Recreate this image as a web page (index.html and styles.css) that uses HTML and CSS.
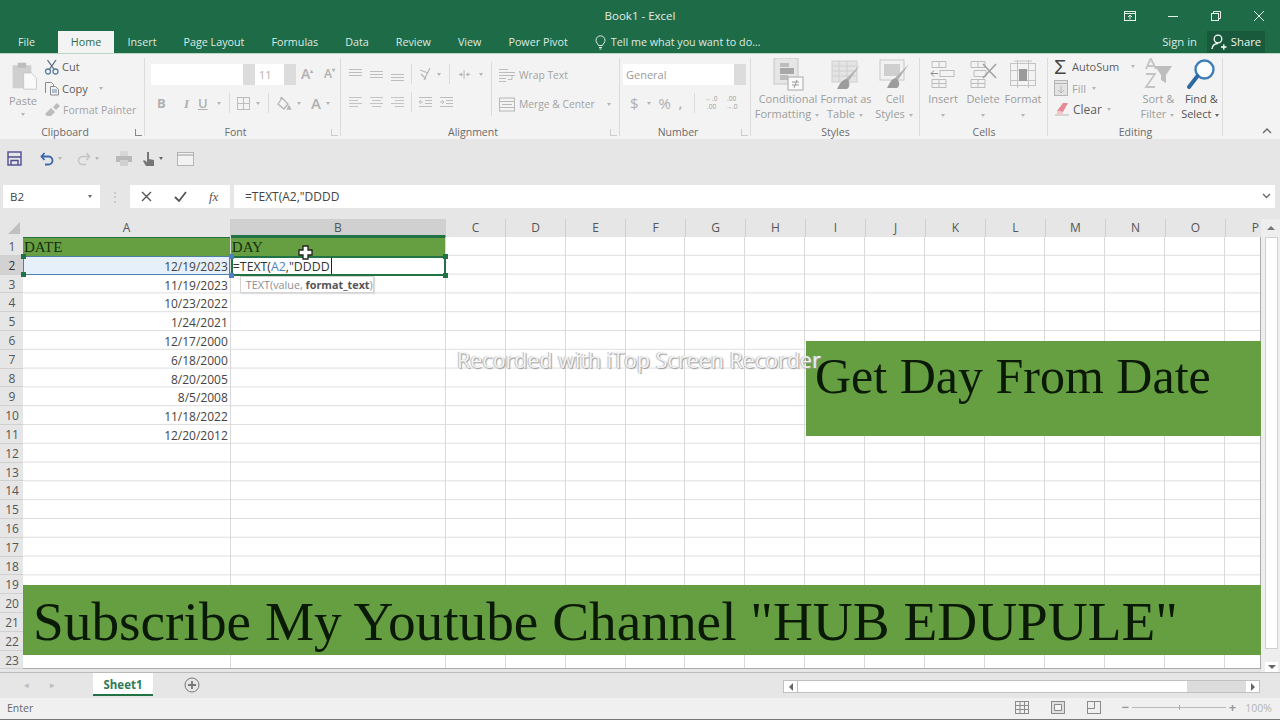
FILE: index.html
```html
<!DOCTYPE html>
<html lang="en">
<head>
<meta charset="utf-8">
<title>Book1 - Excel</title>
<link rel="stylesheet" href="styles.css">
</head>
<body>
<div class="app">
  <header class="titlebar">
    <div></div>
    <div class="doc-title">Book1 - Excel</div>
    <div class="win-controls">
      <span class="win-btn"><svg width="14" height="12" viewBox="0 0 14 12" fill="none" stroke="#e8f0ec"><rect x="1.5" y="1.5" width="11" height="9"/><path d="M1.5 3.5h11M7 9.5v-4M5 7l2-2 2 2"/></svg></span>
      <span class="win-btn"><svg width="12" height="12" viewBox="0 0 12 12" stroke="#e8f0ec"><path d="M1 6.5h10"/></svg></span>
      <span class="win-btn"><svg width="12" height="12" viewBox="0 0 12 12" fill="none" stroke="#e8f0ec"><rect x="1.5" y="3.5" width="7" height="7"/><path d="M3.5 3.5v-2h7v7h-2"/></svg></span>
      <span class="win-btn"><svg width="12" height="12" viewBox="0 0 12 12" stroke="#e8f0ec"><path d="M1 1l10 10M11 1L1 11"/></svg></span>
    </div>
  </header>

  <nav class="tabs">
    <span class="tab tab-file">File</span>
    <span class="tab tab-active">Home</span>
    <span class="tab">Insert</span>
    <span class="tab">Page Layout</span>
    <span class="tab">Formulas</span>
    <span class="tab">Data</span>
    <span class="tab">Review</span>
    <span class="tab">View</span>
    <span class="tab">Power Pivot</span>
    <span class="tab tell"><svg width="11" height="15" viewBox="0 0 11 15" fill="none" stroke="#dfeae4"><path d="M3.5 10.5C2.8 8.5 1 7.700 1 5.300a4.500 4.500 0 0 1 9 0C10 7.700 8.200 8.500 7.500 10.500zM4 12.500h3M4.500 14h2"/></svg>Tell me what you want to do...</span>
    <span class="tabs-right">
      <span class="signin">Sign in</span>
      <span class="share"><svg width="16" height="16" viewBox="0 0 16 16" fill="none" stroke="#fff" stroke-width="1.300"><circle cx="7" cy="5" r="3.800"/><path d="M1 15c.5-4 3-5.500 6-5.500M10 13h5.500M12.800 10.300v5.400"/></svg><span class="share-text">Share</span></span>
    </span>
  </nav>

  <section class="ribbon">
    <div class="group g-clip has-launcher">
      <div class="group-body clip-body">
        <div class="paste">
          <svg width="27" height="29" viewBox="0 0 30 34"><rect x="1" y="5" width="22" height="27" fill="#cfcfcf"/><rect x="7" y="2" width="10" height="6" fill="#bdbdbd"/><path d="M14 14h9l6 6v13H14z" fill="#fafafa" stroke="#c4c4c4"/></svg>
          <span>Paste</span>
          <i class="caret"></i>
        </div>
        <div class="stack clip-stack">
          <div class="line strong"><svg width="16" height="16" viewBox="0 0 16 16" fill="none" stroke="#5b6b78" stroke-width="1.300"><circle cx="4" cy="12.500" r="2.500" stroke="#5a7fa0"/><circle cx="11.500" cy="12.500" r="2.500" stroke="#5a7fa0"/><path d="M5.300 10.500L12 1M10.200 10.500L3.500 1"/></svg>Cut</div>
          <div class="line strong"><svg width="16" height="15" viewBox="0 0 16 15" fill="none" stroke="#8a8a8a"><path d="M1.500 12V1.500h6l2 2V5"/><path d="M6.500 5.500h5l3 3v5.500h-8z"/><path d="M8 9h5M8 11h5" stroke="#6b8bb0"/></svg>Copy<i class="caret caret-gap"></i></div>
          <div class="line dim painter"><svg width="17" height="15" viewBox="0 0 17 15" fill="#bcbcbc"><path d="M1 12l6-6 4 4-4 4H3zM9 5l4-4 3 3-4 4z"/></svg>Format Painter</div>
        </div>
      </div>
      <div class="group-label">Clipboard<i class="launcher launcher-dark"></i></div>
    </div>

    <div class="group g-font has-launcher">
      <div class="group-body font-body">
        <div class="tool-row">
          <span class="combo combo-name"><b></b></span>
          <span class="combo combo-size">11<b></b></span>
          <span class="glyph glyph-big first-a">A<sup>▴</sup></span>
          <span class="glyph glyph-small">A<sup>▾</sup></span>
        </div>
        <div class="tool-row row-font2">
          <span class="glyph bold">B</span>
          <span class="glyph italic">I</span>
          <span class="glyph under">U</span>
          <i class="caret"></i>
          <i class="vsep"></i>
          <svg width="15" height="15" viewBox="0 0 15 15" fill="none" stroke="#bdbdbd"><rect x="1.500" y="1.500" width="12" height="12"/><path d="M7.500 1.500v12M1.500 7.500h12"/></svg>
          <i class="caret"></i>
          <i class="vsep"></i>
          <svg width="17" height="15" viewBox="0 0 17 15" fill="none" stroke="#b5b5b5" stroke-width="1.300"><path d="M7 2l6 6-4 5-6-5zM6 1v3"/><path d="M14 10l1.500 3h-3z" fill="#ccc"/></svg>
          <i class="caret"></i>
          <span class="glyph font-a">A</span>
          <i class="caret"></i>
        </div>
      </div>
      <div class="group-label">Font<i class="launcher"></i></div>
    </div>

    <div class="group g-align has-launcher">
      <div class="group-body align-body">
        <div class="align-grid">
          <div class="tool-row row-a1">
            <svg class="al" width="15" height="15" viewBox="0 0 15 15" stroke="#bdbdbd"><path d="M1 2.500h13M1 5.500h13M1 8.500h13" fill="none"/></svg>
            <svg class="al" width="15" height="15" viewBox="0 0 15 15" stroke="#bdbdbd"><path d="M1 4.500h13M1 7.500h13M1 10.500h13" fill="none"/></svg>
            <svg class="al" width="15" height="15" viewBox="0 0 15 15" stroke="#bdbdbd"><path d="M1 7.500h13M1 10.500h13M1 13.500h13" fill="none"/></svg>
            <i class="vsep sep-a"></i>
            <svg width="17" height="15" viewBox="0 0 17 15" fill="none" stroke="#b8b8b8" stroke-width="1.200"><path d="M2 3l8 3M3 7l5 5M12 1L6 13"/></svg>
            <i class="caret"></i>
            <i class="vsep sep-c"></i>
            <svg width="13" height="11" viewBox="0 0 15 11" fill="none" stroke="#b5b5b5"><path d="M1 5.500h4M3 3.500l2 2-2 2M7 .5v10M14 5.500h-4M12 3.500l-2 2 2 2" stroke-width="1.200"/></svg>
            <i class="caret caret-merge"></i>
          </div>
          <div class="tool-row row-a2">
            <svg class="al" width="15" height="15" viewBox="0 0 15 15" stroke="#c4c4c4"><path d="M1 2.500h13M1 5.500h9M1 8.500h13M1 11.500h9" fill="none"/></svg>
            <svg class="al" width="15" height="15" viewBox="0 0 15 15" stroke="#c4c4c4"><path d="M1 2.500h13M3 5.500h9M1 8.500h13M3 11.500h9" fill="none"/></svg>
            <svg class="al" width="15" height="15" viewBox="0 0 15 15" stroke="#c4c4c4"><path d="M1 2.500h13M5 5.500h9M1 8.500h13M5 11.500h9" fill="none"/></svg>
            <i class="vsep sep-a"></i>
            <svg width="15" height="15" viewBox="0 0 15 15" fill="none" stroke="#bdbdbd"><path d="M1 2.500h13M7 5.500h7M7 8.500h7M1 11.500h13M5 7H1M3 5L1 7l2 2"/></svg>
            <svg class="ind" width="15" height="15" viewBox="0 0 15 15" fill="none" stroke="#bdbdbd"><path d="M1 2.500h13M7 5.500h7M7 8.500h7M1 11.500h13M1 7h4M3 5l2 2-2 2"/></svg>
          </div>
        </div>
        <i class="vsep sep-tall"></i>
        <div class="merge-col">
          <div class="line dim"><svg width="18" height="15" viewBox="0 0 18 15" fill="none" stroke="#bcbcbc"><path d="M1 1.500h9M1 4.500h16M1 7.500h16M1 10.500h7M1 13.500h7M14 7.500v4h-4"/></svg>Wrap Text</div>
          <div class="line dim"><svg width="18" height="15" viewBox="0 0 18 15" fill="none" stroke="#b8b8b8"><rect x="1.500" y="1" width="15" height="13"/><path d="M1.500 4.500h15M1.500 10.500h15M4 7.500h10"/></svg>Merge &amp; Center<i class="caret caret-gap"></i></div>
        </div>
      </div>
      <div class="group-label">Alignment<i class="launcher"></i></div>
    </div>

    <div class="group g-num has-launcher">
      <div class="group-body font-body num-body">
        <div class="tool-row">
          <span class="combo combo-gen">General<b></b></span>
        </div>
        <div class="tool-row row-num2">
          <span class="glyph dollar">$</span>
          <i class="caret"></i>
          <span class="glyph pct">%</span>
          <span class="glyph comma">,</span>
          <i class="vsep"></i>
          <span class="dec">←.0<br>.00</span>
          <span class="dec">.00<br>→.0</span>
        </div>
      </div>
      <div class="group-label">Number<i class="launcher"></i></div>
    </div>

    <div class="group g-styles">
      <div class="group-body big-body styles-body">
        <div class="big big-cf">
          <svg width="34" height="33" viewBox="0 0 34 33"><rect x="3" y="0" width="24" height="26" fill="#e6e6e6" stroke="#c8c8c8"/><rect x="9" y="5" width="9" height="4" fill="#bdbdbd"/><rect x="9" y="10" width="14" height="6" fill="#a8a8a8"/><rect x="9" y="17" width="8" height="5" fill="#bdbdbd"/><rect x="17" y="19" width="15" height="13" fill="#fafafa" stroke="#a8a8a8"/><path d="M21 24h7M21 27h7M26 22l-3 8" stroke="#9a9a9a" fill="none"/></svg>
          <span>Conditional<br>Formatting<i class="caret inline"></i></span>
        </div>
        <div class="big big-ft">
          <svg width="34" height="33" viewBox="0 0 34 33"><rect x="3" y="3" width="25" height="21" fill="#e4e4e4" stroke="#cfcfcf"/><path d="M3 8h25M3 13h25M3 18h25M10 3v21M18 3v21" stroke="#cfcfcf"/><path d="M31 7L19 24l-3-2z" fill="#b0b0b0"/><path d="M17 21c-6 2-7 7-9 10h10c3-2 3-6 1-9z" fill="#9c9c9c"/></svg>
          <span>Format as<br>Table<i class="caret inline"></i></span>
        </div>
        <div class="big big-cs">
          <svg width="32" height="33" viewBox="0 0 32 33"><rect x="1" y="2" width="24" height="20" fill="#f2f2f2" stroke="#c8c8c8"/><rect x="5" y="6" width="16" height="12" fill="#cfcfcf"/><path d="M30 6L19 22l-3-2z" fill="#b0b0b0"/><path d="M16 20c-5 2-6 7-8 10h10c3-2 3-6 0-9z" fill="#9c9c9c"/></svg>
          <span>Cell<br>Styles<i class="caret inline"></i></span>
        </div>
      </div>
      <div class="group-label">Styles</div>
    </div>

    <div class="group g-cells">
      <div class="group-body big-body cells-body">
        <div class="big big-cell">
          <svg width="26" height="33" viewBox="0 0 26 33" fill="none" stroke="#bdbdbd"><path d="M2 3.500h14v6H2zM9 3.500v6M2 21.500h14v8H2zM9 21.500v8M2 25.500h14"/><path d="M1 15.500h7M4 12.500l-3 3 3 3" stroke="#8f8f8f"/><rect x="10" y="12.500" width="14" height="6"/></svg>
          <span>Insert<br><i class="caret"></i></span>
        </div>
        <div class="big big-cell">
          <svg width="28" height="33" viewBox="0 0 28 33" fill="none" stroke="#bdbdbd"><path d="M2 3.500h14v6H2zM9 3.500v6M2 21.500h14v8H2zM9 21.500v8M2 25.500h14M5 12.500h12v6H5z"/><path d="M14 6l13 14M27 6L14 20" stroke="#a0a0a0" stroke-width="1.500"/></svg>
          <span>Delete<br><i class="caret"></i></span>
        </div>
        <div class="big big-cell">
          <svg width="28" height="33" viewBox="0 0 28 33" fill="none" stroke="#c4c4c4"><rect x="1.500" y="5.500" width="25" height="22"/><path d="M8.500 2v28M19.500 2v28M1.500 12.500h25M1.500 22.500h25M5 3h18"/><rect x="10" y="11" width="8" height="12" fill="#9a9a9a" stroke="none"/></svg>
          <span>Format<br><i class="caret"></i></span>
        </div>
      </div>
      <div class="group-label">Cells</div>
    </div>

    <div class="group g-edit">
      <div class="group-body edit-body">
        <div class="stack edit-stack">
          <div class="line strong"><span class="sigma">Σ</span>AutoSum<i class="caret caret-gap"></i></div>
          <div class="line dim"><svg width="14" height="16" viewBox="0 0 14 16" fill="#e3e3e3" stroke="#b5b5b5"><rect x=".5" y=".5" width="13" height="15"/><path d="M.5 3.500h13M7 6v7M4 10l3 3 3-3" fill="none"/></svg>Fill<i class="caret"></i></div>
          <div class="line strong clear"><svg width="16" height="15" viewBox="0 0 16 15"><path d="M3 9l6-8h5l-5 9z" fill="#e58b93"/><path d="M1 13h14" stroke="#b7b7b7"/><path d="M3 9l6 1-1 3H3z" fill="#f3c6ca"/></svg>Clear<i class="caret"></i></div>
        </div>
        <div class="big big-sort">
          <svg width="30" height="33" viewBox="0 0 30 33"><path d="M13 11 8 1h-.5L3 11M4.500 8h6M3 16h9l-9 13h9" fill="none" stroke="#c4c4c4" stroke-width="1.800"/><path d="M12 8h17l-6 9v8l-5-3v-5z" fill="#bdbdbd"/></svg>
          <span>Sort &amp;<br>Filter<i class="caret inline"></i></span>
        </div>
        <div class="big big-find">
          <svg width="30" height="33" viewBox="0 0 30 33" fill="none"><circle cx="18.500" cy="11.500" r="9" stroke="#3f7fb5" stroke-width="2.400" fill="#fafcfe"/><path d="M11.500 18L3 29" stroke="#2d6aa0" stroke-width="4" stroke-linecap="round"/></svg>
          <span>Find &amp;<br>Select<i class="caret inline caret-dark"></i></span>
        </div>
      </div>
      <div class="group-label">Editing</div>
    </div>
    <div class="collapse"><svg width="10" height="7" viewBox="0 0 10 7" fill="none" stroke="#666" stroke-width="1.300"><path d="M1 6l4-4 4 4"/></svg></div>
  </section>

  <div class="qat">
    <svg width="15" height="15" viewBox="0 0 15 15" fill="none" stroke="#4e4e92" stroke-width="1.400"><rect x="1" y="1" width="13" height="13"/><path d="M1 6h13M4 14v-4.500h7V14"/></svg>
    <svg class="qat-undo" width="14" height="14" viewBox="0 0 14 14" fill="none" stroke="#3a68ad" stroke-width="1.800"><path d="M1.500 4.500h7a4 4 0 0 1 0 8H5M4.500 1L1.500 4.500 4.500 8"/></svg>
    <i class="caret"></i>
    <svg class="qat-redo" width="14" height="14" viewBox="0 0 14 14" fill="none" stroke="#c4c4c4" stroke-width="1.500"><path d="M12.500 4.500h-7a4 4 0 0 0 0 8H9M9.500 1l3 3.500-3 3.500"/></svg>
    <i class="caret"></i>
    <svg class="qat-print" width="16" height="15" viewBox="0 0 16 15" fill="#b9b9b9"><rect x="4" y="0" width="8" height="5" fill="#d6d6d6"/><rect x="0" y="5" width="16" height="6"/><rect x="4" y="9" width="8" height="6" fill="#d0d0d0"/></svg>
    <svg class="qat-touch" width="13" height="16" viewBox="0 0 13 16" fill="#777"><path d="M5 1h2v7l5 1v6H4L1 10l1-1 3 2z"/></svg>
    <i class="caret caret-dark"></i>
    <svg class="qat-win" width="17" height="14" viewBox="0 0 17 14" fill="#f2f2f2" stroke="#b5b5b5"><rect x=".5" y=".5" width="16" height="13"/><path d="M.5 3h16" stroke="#9a9a9a"/></svg>
  </div>

  <div class="formula-bar">
    <div class="name-box">B2<i class="caret caret-dark"></i></div>
    <div class="fb-dots">⋮</div>
    <div class="fx-box">
      <svg width="11" height="11" viewBox="0 0 11 11" stroke="#555" stroke-width="1.400"><path d="M1 1l9 9M10 1l-9 9"/></svg>
      <svg width="13" height="11" viewBox="0 0 13 11" fill="none" stroke="#555" stroke-width="1.800"><path d="M1 6l4 4 7-9"/></svg>
      <span class="fx">fx</span>
    </div>
    <div class="formula-input">=TEXT(A2,"DDDD<svg class="fb-chev" width="9" height="6" viewBox="0 0 9 6" fill="none" stroke="#666" stroke-width="1.300"><path d="M1 1l3.500 3.500L8 1"/></svg></div>
  </div>

  <main class="sheet">
    <div class="col-heads">
      <div class="corner"><svg width="12" height="12" viewBox="0 0 12 12" fill="#c0c0c0"><path d="M12 0v12H0z"/></svg></div>
      <div class="ch ch-a">A</div><div class="ch ch-b">B</div>
      <div class="ch">C</div><div class="ch">D</div><div class="ch">E</div><div class="ch">F</div><div class="ch">G</div>
      <div class="ch">H</div><div class="ch">I</div><div class="ch">J</div><div class="ch">K</div><div class="ch">L</div>
      <div class="ch">M</div><div class="ch">N</div><div class="ch">O</div><div class="ch ch-p">P</div>
      <div class="sb-up"><i class="tri-up"></i></div>
    </div>
    <div class="sheet-body">
      <div class="row-heads">
        <div>1</div><div class="rh-active">2</div><div>3</div><div>4</div><div>5</div><div>6</div><div>7</div><div>8</div>
        <div>9</div><div>10</div><div>11</div><div>12</div><div>13</div><div>14</div><div>15</div><div>16</div>
        <div>17</div><div>18</div><div>19</div><div>20</div><div>21</div><div>22</div><div>23</div>
      </div>
      <div class="grid">
        <div class="col col-a">
          <div class="cell head">DATE</div>
          <div class="cell date ref-cell">12/19/2023<i class="h h-tl"></i><i class="h h-bl"></i></div>
          <div class="cell date">11/19/2023</div>
          <div class="cell date">10/23/2022</div>
          <div class="cell date">1/24/2021</div>
          <div class="cell date">12/17/2000</div>
          <div class="cell date">6/18/2000</div>
          <div class="cell date">8/20/2005</div>
          <div class="cell date">8/5/2008</div>
          <div class="cell date">11/18/2022</div>
          <div class="cell date">12/20/2012</div>
        </div>
        <div class="col col-b">
          <div class="cell head">DAY</div>
          <div class="cell edit-cell">=TEXT(<span class="ref">A2</span>,"DDDD<i class="text-caret"></i><i class="h h-ltop"></i><i class="h h-lbot"></i><i class="h h-rtop"></i><i class="h h-rbot"></i></div>
          <div class="tip">TEXT(value, <b>format_text</b>)</div>
        </div>
        <div class="col"></div><div class="col"></div><div class="col"></div><div class="col"></div><div class="col"></div>
        <div class="col"></div><div class="col"></div><div class="col"></div><div class="col"></div><div class="col"></div>
        <div class="col"></div><div class="col"></div><div class="col"></div><div class="col col-p"></div>

        <div class="banner banner-day">Get Day From Date</div>
        <div class="banner banner-sub">Subscribe My Youtube Channel "HUB EDUPULE"</div>
        <div class="watermark">Recorded with iTop Screen Recorder</div>
        <svg class="cross" width="15" height="15" viewBox="0 0 15 15"><path d="M5 1h5v4h4v5h-4v4H5v-4H1V5h4z" fill="#fff" stroke="#222" stroke-width="1.300"/></svg>
      </div>
      <div class="vscroll"><div class="thumb"></div><div class="sb-down"><i class="tri-down"></i></div></div>
    </div>
  </main>

  <div class="sheet-tabs">
    <span class="nav-arrow">◂</span>
    <span class="nav-arrow">▸</span>
    <span class="sheet-tab">Sheet1</span>
    <svg class="add-sheet" width="16" height="16" viewBox="0 0 16 16" fill="none" stroke="#777"><circle cx="8" cy="8" r="7"/><path d="M8 4v8M4 8h8" stroke-width="1.800"/></svg>
    <div class="hscroll">
      <span class="hs-btn"><i class="tri-left"></i></span>
      <span class="hs-thumb"></span>
      <span class="hs-btn"><i class="tri-right"></i></span>
    </div>
  </div>

  <footer class="status">
    <span class="mode">Enter</span>
    <div class="status-right">
      <svg width="14" height="13" viewBox="0 0 14 13" fill="none" stroke="#8a8a8a"><rect x=".5" y=".5" width="13" height="12"/><path d="M5 .5v12M9.500 .5v12M.5 4.500h13M.5 8.500h13"/></svg>
      <svg width="14" height="13" viewBox="0 0 14 13" fill="#dedede" stroke="#8a8a8a"><rect x=".5" y=".5" width="13" height="12"/><path d="M3.500 3.500h7v6h-7z" fill="#f5f5f5"/></svg>
      <svg width="14" height="13" viewBox="0 0 14 13" fill="none" stroke="#8a8a8a"><rect x=".5" y=".5" width="13" height="12"/><path d="M7.500.5v7H.5"/></svg>
      <span class="zoom-slider"><span class="zs-sign">−</span><span class="zs-track"><i></i></span><span class="zs-sign">+</span></span>
      <span class="zoom-pct">100%</span>
    </div>
  </footer>
</div>
</body>
</html>
```

FILE: styles.css
```css
* { box-sizing: border-box; }
html, body { margin: 0; height: 100%; overflow: hidden; }
body { font-family: "Open Sans", "Liberation Sans", sans-serif; font-size: 11px; color: #444; background: #e6e6e6; }
i { display: inline-block; font-style: normal; }
svg { display: block; flex: none; }
.app { width: 1280px; height: 720px; display: flex; flex-direction: column; border-bottom: 1px solid #777; }

/* title + tabs */
.titlebar { height: 31px; background: #1e6b47; color: #e2ece7; display: grid; grid-template-columns: 1fr auto 1fr; align-items: center; }
.doc-title { font-size: 11.5px; }
.win-controls { display: flex; justify-content: flex-end; }
.win-btn { width: 43px; display: flex; justify-content: center; }
.tabs { height: 22px; background: #1e6b47; color: #dfeae4; display: flex; align-items: center; font-size: 10.75px; padding-left: 4.5px; }
.tab { padding: 0 13.5px; line-height: 22px; }
.tab-active { background: #f3f3f3; color: #2a6d4b; width: 56px; text-align: center; padding: 0; }
.tab-file { width: 53.5px; }
.tell { display: flex; align-items: center; gap: 5px; }
.tabs-right { margin-left: auto; display: flex; align-items: center; padding-right: 15px; font-size: 11.3px; }
.signin { margin: 0 10px 1px 0; }
.share { width: 58px; height: 22px; background: #195a3c; display: flex; align-items: center; justify-content: center; gap: 4px; color: #eef4f1; }
.share-text { margin-bottom: 1px; }

/* ribbon */
.ribbon { height: 86px; background: #f3f3f3; display: flex; position: relative; color: #9d9d9d; border-top: 1px solid #b6d8c4; }
.group { display: flex; flex-direction: column; position: relative; }
.group::after { content: ""; position: absolute; right: 0; top: 4px; bottom: 3px; width: 1px; background: #dcdcdc; }
.g-clip { width: 145px; } .g-font { width: 196px; } .g-align { width: 279px; } .g-num { width: 131px; }
.g-styles { width: 169px; } .g-cells { width: 128px; } .g-edit { width: 175px; }
.group-body { height: 71px; display: flex; }
.group-label { height: 14px; line-height: 14px; text-align: center; color: #6a6a6a; font-size: 10.5px; }
.has-launcher .group-label { padding-right: 15px; }
.launcher { position: absolute; right: 3px; bottom: 3px; width: 7px; height: 7px; border-left: 1px solid #ccc; border-bottom: 1px solid #ccc; }
.launcher-dark { border-color: #888; }
.caret { width: 0; height: 0; border: 2.5px solid transparent; border-top: 3px solid #b5b5b5; border-bottom: 0; margin: 0 2px; }
.caret-gap { margin-left: 9px; }
.caret.inline { margin-left: 4px; vertical-align: middle; }
.caret-dark { border-top-color: #666; }
.vsep { width: 1px; height: 20px; background: #dcdcdc; }

.clip-body { padding: 2px 0 0 8px; gap: 6px; }
.paste { width: 30px; display: flex; flex-direction: column; align-items: center; line-height: 13px; }
.paste svg { margin: 5px 0 4px 2px; }
.paste .caret { margin-top: 6px; }
.stack { display: flex; flex-direction: column; }
.clip-stack .line { gap: 2px; }
.painter { font-size: 10.5px; }
.line { height: 21.5px; display: flex; align-items: center; gap: 3px; white-space: nowrap; }
.strong { color: #5e5e5e; }
.dim { color: #a3a3a3; }
.clear { font-size: 12px; }

.font-body { flex-direction: column; padding: 9px 0 0 6px; gap: 7px; }
.tool-row { height: 22px; display: flex; align-items: center; }
.combo { height: 21px; background: #fff; display: flex; align-items: center; position: relative; color: #b0b0b0; padding-left: 4px; }
.combo b { position: absolute; right: 0; top: 0; bottom: 0; width: 12px; background: #dcdcdc; }
.combo-name { width: 104px; }
.combo-size { width: 41px; }
.combo-gen { width: 123px; padding-left: 3px; font-size: 11px; color: #9a9a9a; }
.glyph { color: #b0b0b0; font-size: 13px; font-weight: 600; line-height: 1; }
.glyph sup { font-size: 6px; vertical-align: 6px; line-height: 0; }
.first-a { margin-left: 5px; font-size: 14px; width: 23px; }
.glyph-small { font-size: 12px; }
.bold { font-weight: 700; margin-left: 6px; width: 23px; }
.italic { font-style: italic; font-family: "Liberation Serif", serif; width: 19px; margin-left: 1px; }
.under { text-decoration: underline; width: 14px; margin-left: -8px; }
.row-font2 { gap: 3px; }
.row-font2 .vsep { margin: 0 3px; }
.font-a { font-size: 15px; margin-left: 5px; }

.align-body { padding: 6px 0 0 7px; }
.align-grid { width: 143px; display: flex; flex-direction: column; gap: 6px; }
.al { margin-right: 6px; }
.sep-a { margin-right: 6px; }
.sep-c { margin: 0 8px 0 6px; }
.row-a2 { height: 22px; }
.row-a1 { height: 22px; margin-top: 3px; }
.caret-merge { margin-left: 8px; }
.ind { margin-left: 6px; }
.sep-tall { height: 54px; margin: 2px 6px 0 0; }
.merge-col { display: flex; flex-direction: column; gap: 7px; padding-top: 4px; font-size: 10.3px; }
.merge-col .line { gap: 3px; height: 22px; }

.num-body { padding-left: 3px; }
.row-num2 { padding-left: 7px; color: #b0b0b0; }
.dollar { font-size: 15px; font-weight: 400; }
.row-num2 .caret { margin: 0 8px 0 8px; }
.pct { font-size: 15px; font-weight: 400; width: 20px; }
.comma { width: 10px; font-size: 14px; }
.row-num2 .vsep { margin: 0 7px 0 5px; }
.dec { font-size: 6.5px; line-height: 8px; width: 20px; color: #a0a0a0; text-align: center; white-space: nowrap; }

.big-body { padding-top: 4px; }
.big { display: flex; flex-direction: column; align-items: center; text-align: center; line-height: 15px; }
.big span { display: block; white-space: nowrap; }
.big .caret { vertical-align: middle; }
.styles-body { padding-left: 4px; }
.big-cf { width: 66px; }
.big-ft { width: 50px; }
.big-cs { width: 48px; }
.cells-body { padding-left: 3px; }
.big-cell { width: 40px; }
.edit-body { padding: 2px 0 0 6px; }
.edit-stack { width: 84px; }
.edit-body .big { padding-top: 2px; }
.sigma { font-size: 20px; line-height: 1; color: #444; font-family: "Liberation Sans", sans-serif; width: 15px; }
.edit-stack .line:nth-child(2) { gap: 4px; }
.big-sort { width: 43px; }
.big-find { width: 44px; color: #555; }
.collapse { position: absolute; right: 8px; bottom: 5px; }

/* QAT */
.qat { height: 39px; display: flex; align-items: center; padding-left: 7px; background: #e6e6e6; gap: 2px; }
.qat-undo { margin-left: 16px; }
.qat-redo { margin-left: 11px; }
.qat-print { margin-left: 13px; }
.qat-touch { margin-left: 8px; }
.qat-win { margin-left: 10px; }

/* formula bar */
.formula-bar { margin-top: 7px; height: 23px; display: flex; padding: 0 5px 0 3px; font-size: 12px; }
.name-box { width: 97px; background: #fff; display: flex; align-items: center; justify-content: space-between; padding: 0 6px 0 7px; color: #444; font-size: 11.5px; }
.fb-dots { width: 30px; text-align: center; color: #bdbdbd; line-height: 23px; }
.fx-box { width: 100px; background: #fff; display: flex; align-items: center; gap: 22px; padding-left: 11px; }
.fx { font-family: "Liberation Serif", serif; font-style: italic; font-size: 13px; color: #555; }
.formula-input { flex: 1; margin-left: 4px; background: #fff; display: flex; align-items: center; padding-left: 11px; color: #444; position: relative; }
.fb-chev { position: absolute; right: 4px; top: 8px; }

/* sheet */
.sheet { margin-top: 11px; height: 450px; display: flex; flex-direction: column; background: #fff; }
.col-heads { height: 18px; display: flex; background: #e6e6e6; font-size: 12px; color: #555; }
.corner { width: 23px; display: flex; align-items: flex-end; justify-content: flex-end; padding: 0 3px 3px 0; }
.ch { width: 60px; text-align: center; line-height: 18px; border-right: 1px solid #cfcfcf; }
.ch-a { width: 208px; }
.ch-b { width: 215px; background: #d0d0d0; border-bottom: 2px solid #217346; }
.ch-p { width: 35px; text-align: right; padding-right: 2px; border-right: 0; }
.sb-up { width: 19px; display: flex; align-items: center; justify-content: center; background: #eee; }
.tri-up, .tri-down, .tri-left, .tri-right { width: 0; height: 0; border: 4px solid transparent; }
.tri-up { border-bottom-color: #777; border-top: 0; }
.tri-down { border-top-color: #666; border-bottom: 0; }
.tri-left { border-right-color: #666; border-left: 0; }
.tri-right { border-left-color: #666; border-right: 0; }

.sheet-body { flex: 1; display: flex; }
.row-heads { width: 23px; background: #e6e6e6; font-size: 12px; color: #555; }
.row-heads div { height: 18.8px; line-height: 20.5px; text-align: center; border-bottom: 1px solid #d0d0d0; padding-left: 1px; overflow: hidden; }
.rh-active { background: #d2d2d2; color: #333; }
.grid { width: 1238px; height: 432.4px; display: flex; position: relative; border-right: 1px solid #aaa; border-bottom: 1px solid #aaa; }
.col { width: 60px; border-right: 1px solid #d9d9d9; background: linear-gradient(to top, #dedede 1px, transparent 1px) 0 0 / 100% 18.8px; position: relative; }
.col-a { width: 208px; }
.col-b { width: 215px; }
.col-p { width: 35px; border-right: 0; }
.cell { height: 18.8px; line-height: 21px; position: relative; font-size: 12px; color: #444; white-space: nowrap; }
.head { background: #659f42; font-family: "Liberation Serif", serif; font-size: 15px; color: #16300c; padding-left: 1px; border-top: 1px solid #217346; line-height: 19px; }
.date { text-align: right; padding-right: 2px; }
.ref-cell { background: #e5f0fa; box-shadow: inset 0 0 0 1px #4e7fa8; }
.edit-cell { height: 20px; background: #fff; color: #333; padding-left: 2px; font-size: 12.3px; box-shadow: inset 0 0 0 2px #217346; z-index: 2; margin-right: -1px; }
.ref { color: #4a7fc0; }
.text-caret { width: 1px; height: 16px; background: #222; vertical-align: -3px; margin-left: 1px; }
.h { position: absolute; width: 5px; height: 5px; }
.h-tl { left: -2px; top: -2px; background: #217346; }
.h-bl { left: -2px; bottom: -2px; background: #217346; }
.h-ltop { left: -2px; top: -2px; background: #4e7fc0; }
.h-lbot { left: -2px; bottom: -2px; background: #4e7fc0; }
.h-rtop { right: -2px; top: -2px; background: #217346; }
.h-rbot { right: -2px; bottom: -2px; background: #217346; }
.tip { position: absolute; left: 9px; top: 39px; height: 17px; width: 134px; background: #fff; border: 1px solid #d4d4d4; box-shadow: 1px 1px 1px #ddd; font-size: 10.8px; line-height: 15px; padding-left: 5px; color: #8a8f96; white-space: nowrap; z-index: 3; }
.tip b { color: #555; font-weight: 700; }

.banner { position: absolute; background: #659f42; font-family: "Liberation Serif", serif; color: #0b1a06; white-space: nowrap; }
.banner-day { left: 783px; top: 104px; width: 455px; height: 95px; font-size: 50px; padding: 7px 0 0 9px; line-height: 57px; }
.banner-sub { left: 0; top: 348px; width: 1238px; height: 70px; font-size: 55.3px; line-height: 74px; padding-left: 10px; }
.watermark { position: absolute; left: 434px; top: 110px; font-size: 21.5px; line-height: 26px; color: rgba(255,255,255,.85); text-shadow: 1px 1px 1px #999, -1px 0 1px #bbb; white-space: nowrap; z-index: 2; }
.cross { position: absolute; left: 275px; top: 8px; z-index: 4; }

.vscroll { flex: 1; padding: 0 2px 0 4px; display: flex; flex-direction: column; height: 435px; background: #eee; }
.thumb { height: 412px; background: #fff; border: 1px solid #d0d0d0; }
.sb-down { margin-top: 13px; height: 10px; display: flex; align-items: center; justify-content: center; background: #fff; }

/* tabs + status */
.sheet-tabs { height: 26px; margin-top: 3px; background: #e6e6e6; border-top: 1px solid #bbb; display: flex; position: relative; align-items: flex-start; }
.nav-arrow { width: 26px; text-align: center; color: #bbb; font-size: 9px; line-height: 24px; }
.nav-arrow:first-child { margin-left: 13px; }
.sheet-tab { margin-left: 28px; width: 60px; height: 23px; background: #fff; color: #2f7a57; font-weight: 700; font-size: 11.5px; text-align: center; line-height: 23px; border-bottom: 2px solid #217346; }
.add-sheet { margin: 4px 0 0 31px; }
.hscroll { margin-left: auto; margin-right: 20px; margin-top: 7px; width: 477px; height: 13px; display: flex; background: #dcdcdc; border: 1px solid #c0c0c0; }
.hs-btn { width: 13px; background: #fff; display: flex; align-items: center; justify-content: center; }
.hs-thumb { width: 390px; background: #fff; border-left: 1px solid #c0c0c0; margin-right: auto; }
.status { flex: 1; background: #f0f0f0; display: flex; align-items: center; justify-content: space-between; padding: 0 8px 2px 7px; font-size: 10.5px; color: #666; }
.status-right { display: flex; align-items: center; }
.status-right svg { margin-right: 22px; }
.zoom-slider { display: flex; align-items: center; margin-left: -2px; }
.zs-sign { font-size: 13px; line-height: 1; color: #999; font-weight: 700; }
.zs-track { width: 94px; height: 1px; background: #bbb; margin: 0 3px; position: relative; }
.zs-track i { position: absolute; left: 47px; top: -2px; width: 1px; height: 5px; background: #aaa; }
.zoom-pct { margin-left: 9px; color: #b5b5b5; }
```
